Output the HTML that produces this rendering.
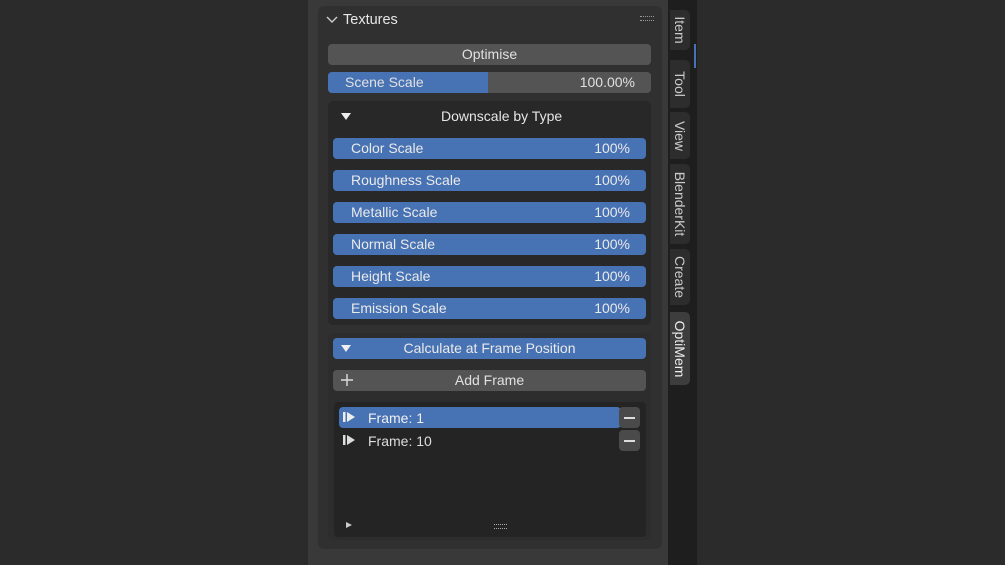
<!DOCTYPE html><html><head><style>
*{margin:0;padding:0;box-sizing:border-box}
body{width:1005px;height:565px;background:#2b2b2b;position:relative;overflow:hidden;font-family:"Liberation Sans",sans-serif;color:#e0e0e0;font-size:14px}
.a{position:absolute}
.btn{position:absolute;border-radius:4px;height:21px;line-height:21px}
.blue{background:#4772b3;color:#eaeaea}
.gray{background:#545454;color:#e0e0e0}
.row{left:333px;width:313px}
.row span{position:absolute;left:18px}
.row b{position:absolute;right:16px;font-weight:normal}
.tab{position:absolute;left:670px;width:20px;background:#2d2d2d;border-radius:0 5px 5px 0;color:#ccc}
.tab div{position:absolute;left:50%;top:50%;transform:translate(-50%,-50%) rotate(90deg);white-space:nowrap;font-size:14px}
</style></head><body>
<div class="a" style="left:308px;top:0;width:360px;height:565px;background:#393939"></div>
<div class="a" style="left:668px;top:0;width:29px;height:565px;background:#1e1e1e"></div>
<div class="a" style="left:318px;top:6px;width:344px;height:543px;background:#303030;border-radius:6px"></div>
<svg class="a" style="left:325px;top:14px" width="14" height="12"><path d="M2 3 L7 8 L12 3" stroke="#ccc" stroke-width="1.4" fill="none"/></svg>
<div class="a" style="left:343px;top:12px;font-size:14.5px;color:#e6e6e6">Textures</div>
<div class="a" style="left:640px;top:16px;width:14px;height:5px;border-top:1px dotted #999;border-bottom:1px dotted #999"></div>
<div class="btn gray" style="left:328px;top:44px;width:323px;text-align:center">Optimise</div>
<div class="btn" style="left:328px;top:72px;width:323px;background:#545454;overflow:hidden;color:#e0e0e0"><div class="a blue" style="left:0;top:0;width:160px;height:21px"></div><span class="a" style="left:17px">Scene Scale</span><span class="a" style="right:16px">100.00%</span></div>
<div class="a" style="left:328px;top:101px;width:323px;height:224px;background:#282828;border-radius:5px"></div>
<svg class="a" style="left:340px;top:111px" width="12" height="10"><path d="M1 2 L11 2 L6 9Z" fill="#eee"/></svg>
<div class="a" style="left:441px;top:108px;color:#e6e6e6">Downscale by Type</div>
<div class="btn blue row" style="top:138px"><span>Color Scale</span><b>100%</b></div>
<div class="btn blue row" style="top:170px"><span>Roughness Scale</span><b>100%</b></div>
<div class="btn blue row" style="top:202px"><span>Metallic Scale</span><b>100%</b></div>
<div class="btn blue row" style="top:234px"><span>Normal Scale</span><b>100%</b></div>
<div class="btn blue row" style="top:266px"><span>Height Scale</span><b>100%</b></div>
<div class="btn blue row" style="top:298px"><span>Emission Scale</span><b>100%</b></div>
<div class="a" style="left:328px;top:333px;width:323px;height:207px;background:#2d2d2d;border-radius:5px"></div>
<div class="btn blue row" style="top:338px;text-align:center">Calculate at Frame Position</div>
<svg class="a" style="left:340px;top:343px" width="12" height="10"><path d="M1 2 L11 2 L6 9Z" fill="#eee"/></svg>
<div class="btn gray row" style="top:370px;text-align:center">Add Frame</div>
<svg class="a" style="left:340px;top:373px" width="14" height="14"><path d="M7 1V13M1 7H13" stroke="#ddd" stroke-width="1.4"/></svg>
<div class="a" style="left:334px;top:402px;width:312px;height:135px;background:#242424;border-radius:4px"></div>
<div class="btn blue" style="left:339px;top:407px;width:282px"></div>
<div class="btn" style="left:619px;top:407px;width:21px;background:#4a4a4a"></div>
<div class="btn" style="left:619px;top:430px;width:21px;background:#4a4a4a"></div>
<div class="a" style="left:624px;top:417px;width:11px;height:2px;background:#ddd"></div>
<div class="a" style="left:624px;top:440px;width:11px;height:2px;background:#ddd"></div>
<svg class="a" style="left:343px;top:411px" width="14" height="12"><rect x="0" y="1" width="2.5" height="10" fill="#eee"/><path d="M4 1 L12 6 L4 11Z" fill="#eee"/></svg>
<svg class="a" style="left:343px;top:434px" width="14" height="12"><rect x="0" y="1" width="2.5" height="10" fill="#ddd"/><path d="M4 1 L12 6 L4 11Z" fill="#ddd"/></svg>
<div class="a" style="left:368px;top:410px;color:#f0f0f0">Frame: 1</div>
<div class="a" style="left:368px;top:433px;color:#ddd">Frame: 10</div>
<svg class="a" style="left:345px;top:521px" width="8" height="8"><path d="M1 1L7 4L1 7Z" fill="#ccc"/></svg>
<div class="a" style="left:494px;top:524px;width:13px;height:5px;border-top:1px dotted #aaa;border-bottom:1px dotted #aaa"></div>
<div class="tab" style="top:10px;height:40px"><div>Item</div></div>
<div class="tab" style="top:60px;height:48px"><div>Tool</div></div>
<div class="tab" style="top:112px;height:47px"><div>View</div></div>
<div class="tab" style="top:164px;height:80px"><div>BlenderKit</div></div>
<div class="tab" style="top:249px;height:56px"><div>Create</div></div>
<div class="tab" style="top:312px;height:73px;background:#3d3d3d;color:#eee"><div>OptiMem</div></div>
<div class="a" style="left:694px;top:44px;width:2px;height:24px;background:#4772b3"></div>
</body></html>
